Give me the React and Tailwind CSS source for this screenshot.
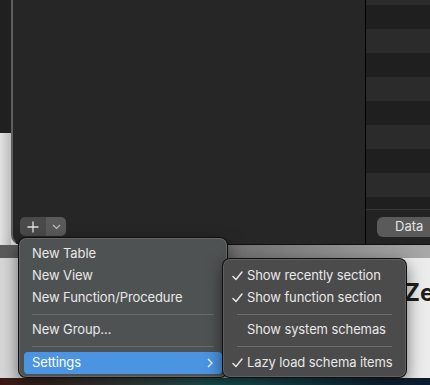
import React from 'react';

const font = { fontFamily: 'Inter, "Noto Sans", "Liberation Sans", sans-serif' };

function Check() {
  return (
    <svg width="11" height="10" viewBox="0 0 11 10" className="shrink-0">
      <path d="M1 5.5 L4 8.5 L10 1" fill="none" stroke="#e6e6e6" strokeWidth="1.5" strokeLinecap="round" strokeLinejoin="round" />
    </svg>
  );
}

function Separator({ h = 'h-[10px]', px = 'px-[14px]' }) {
  return (
    <div className={`${h} ${px} flex items-center`}>
      <div className="h-px w-full bg-[#6a6d6e]" />
    </div>
  );
}

function MenuItem({ children }) {
  return <div className="h-[22px] flex items-center pl-[8px] text-[13px] tracking-[-0.1px] text-[#e8e8e8]">{children}</div>;
}

function SubItem({ checked, children }) {
  return (
    <div className="h-[22px] flex items-center pl-[9px] text-[13px] tracking-[-0.1px] text-[#e8e8e8]">
      <div className="w-[15px]">{checked && <Check />}</div>
      <span>{children}</span>
    </div>
  );
}

export default function App() {
  const rows = Array.from({ length: 9 });

  return (
    <div className="relative w-[430px] h-[385px] overflow-hidden bg-[#d8d8d8] flex flex-col" style={font}>
      {/* main window row */}
      <div className="h-[245px] flex">
        <div className="w-[11px] flex flex-col">
          <div className="h-[133px] bg-[#202020]" />
          <div className="flex-1 bg-gradient-to-r from-[#e2e2e2] to-[#bdbdbd]" />
        </div>
        <div className="flex-1 flex bg-[#262626] rounded-bl-[10px] border-l-2 border-b border-[#5e5e5e] border-b-[#111] overflow-hidden">
          <div className="flex-1 flex flex-col justify-end pb-[8px] pl-[7px]">
            <div className="flex h-[19px] w-[46px] rounded-[5px] overflow-hidden">
              <div className="w-[26px] bg-[#4a4a4a] flex items-center justify-center">
                <svg width="12" height="12" viewBox="0 0 12 12">
                  <path d="M6 0.5 V11.5 M0.5 6 H11.5" stroke="#e4e4e4" strokeWidth="1.3" />
                </svg>
              </div>
              <div className="flex-1 bg-[#5a5a5a] flex items-center justify-center">
                <svg width="9" height="6" viewBox="0 0 9 6">
                  <path d="M1 1 L4.5 4.5 L8 1" fill="none" stroke="#bdbdbd" strokeWidth="1.2" />
                </svg>
              </div>
            </div>
          </div>
          <div className="w-px bg-black" />
          <div className="w-[64px] flex flex-col">
            <div className="h-[209px] overflow-hidden flex flex-col">
              <div className="h-[5px] shrink-0 bg-[#2b2b2b]" />
              {rows.map((_, i) => (
                <div key={i} className={`h-[24px] shrink-0 ${i % 2 === 0 ? 'bg-[#1f1f1f]' : 'bg-[#2b2b2b]'}`} />
              ))}
            </div>
            <div className="flex-1 bg-[#232323] border-t border-[#383838] pt-[7px] pl-[11px]">
              <div className="h-[20px] rounded-l-[6px] bg-[#5a5a5a] flex items-center pl-[18px] text-[13px] text-[#e4e4e4]">
                Data
              </div>
            </div>
          </div>
        </div>
      </div>

      {/* background window below */}
      <div className="flex-1 flex flex-col bg-gradient-to-r from-[#d6d6d6] via-[#d0d0d0] to-[#ececec]">
        <div className="h-[13px] bg-gradient-to-r from-[#5a5a5a] via-[#6c6c6c] to-[#a8a8a8]" />
        <div className="pl-[404px] pt-[23px] text-[24px] font-bold leading-none text-[#1e1e1e] whitespace-nowrap">Ze</div>
      </div>
      <div className="h-[7px] bg-gradient-to-r from-[#3a1812] via-[#1c5b5b] to-[#0b1a2e]" />

      {/* main menu */}
      <div className="absolute left-[18px] top-[237px] w-[210px] h-[141px] rounded-[8px] bg-[#4f5253] border border-black/80 shadow-[inset_0_0_0_1px_rgba(255,255,255,0.12),0_6px_16px_rgba(0,0,0,0.5)] pt-[5px] px-[5px] flex flex-col">
        <MenuItem>New Table</MenuItem>
        <MenuItem>New View</MenuItem>
        <MenuItem>New Function/Procedure</MenuItem>
        <Separator px="px-[8px]" />
        <MenuItem>New Group...</MenuItem>
        <Separator h="h-[11px]" px="px-[8px]" />
        <div className="h-[22px] rounded-[4px] bg-[#4a94e2] flex items-center justify-between pl-[8px] pr-[9px] text-[13px] tracking-[-0.1px] text-white">
          <span>Settings</span>
          <svg width="6" height="10" viewBox="0 0 6 10">
            <path d="M1 1 L5 5 L1 9" fill="none" stroke="#f0f0f0" strokeWidth="1.4" />
          </svg>
        </div>
      </div>

      {/* settings submenu */}
      <div className="absolute left-[222px] top-[258px] w-[185px] h-[120px] rounded-[8px] bg-[#4b4b4b] border border-black/80 shadow-[inset_0_0_0_1px_rgba(255,255,255,0.12),0_6px_16px_rgba(0,0,0,0.5)] pt-[6px] flex flex-col">
        <SubItem checked>Show recently section</SubItem>
        <SubItem checked>Show function section</SubItem>
        <Separator />
        <SubItem>Show system schemas</SubItem>
        <Separator h="h-[11px]" />
        <SubItem checked>Lazy load schema items</SubItem>
      </div>
    </div>
  );
}
